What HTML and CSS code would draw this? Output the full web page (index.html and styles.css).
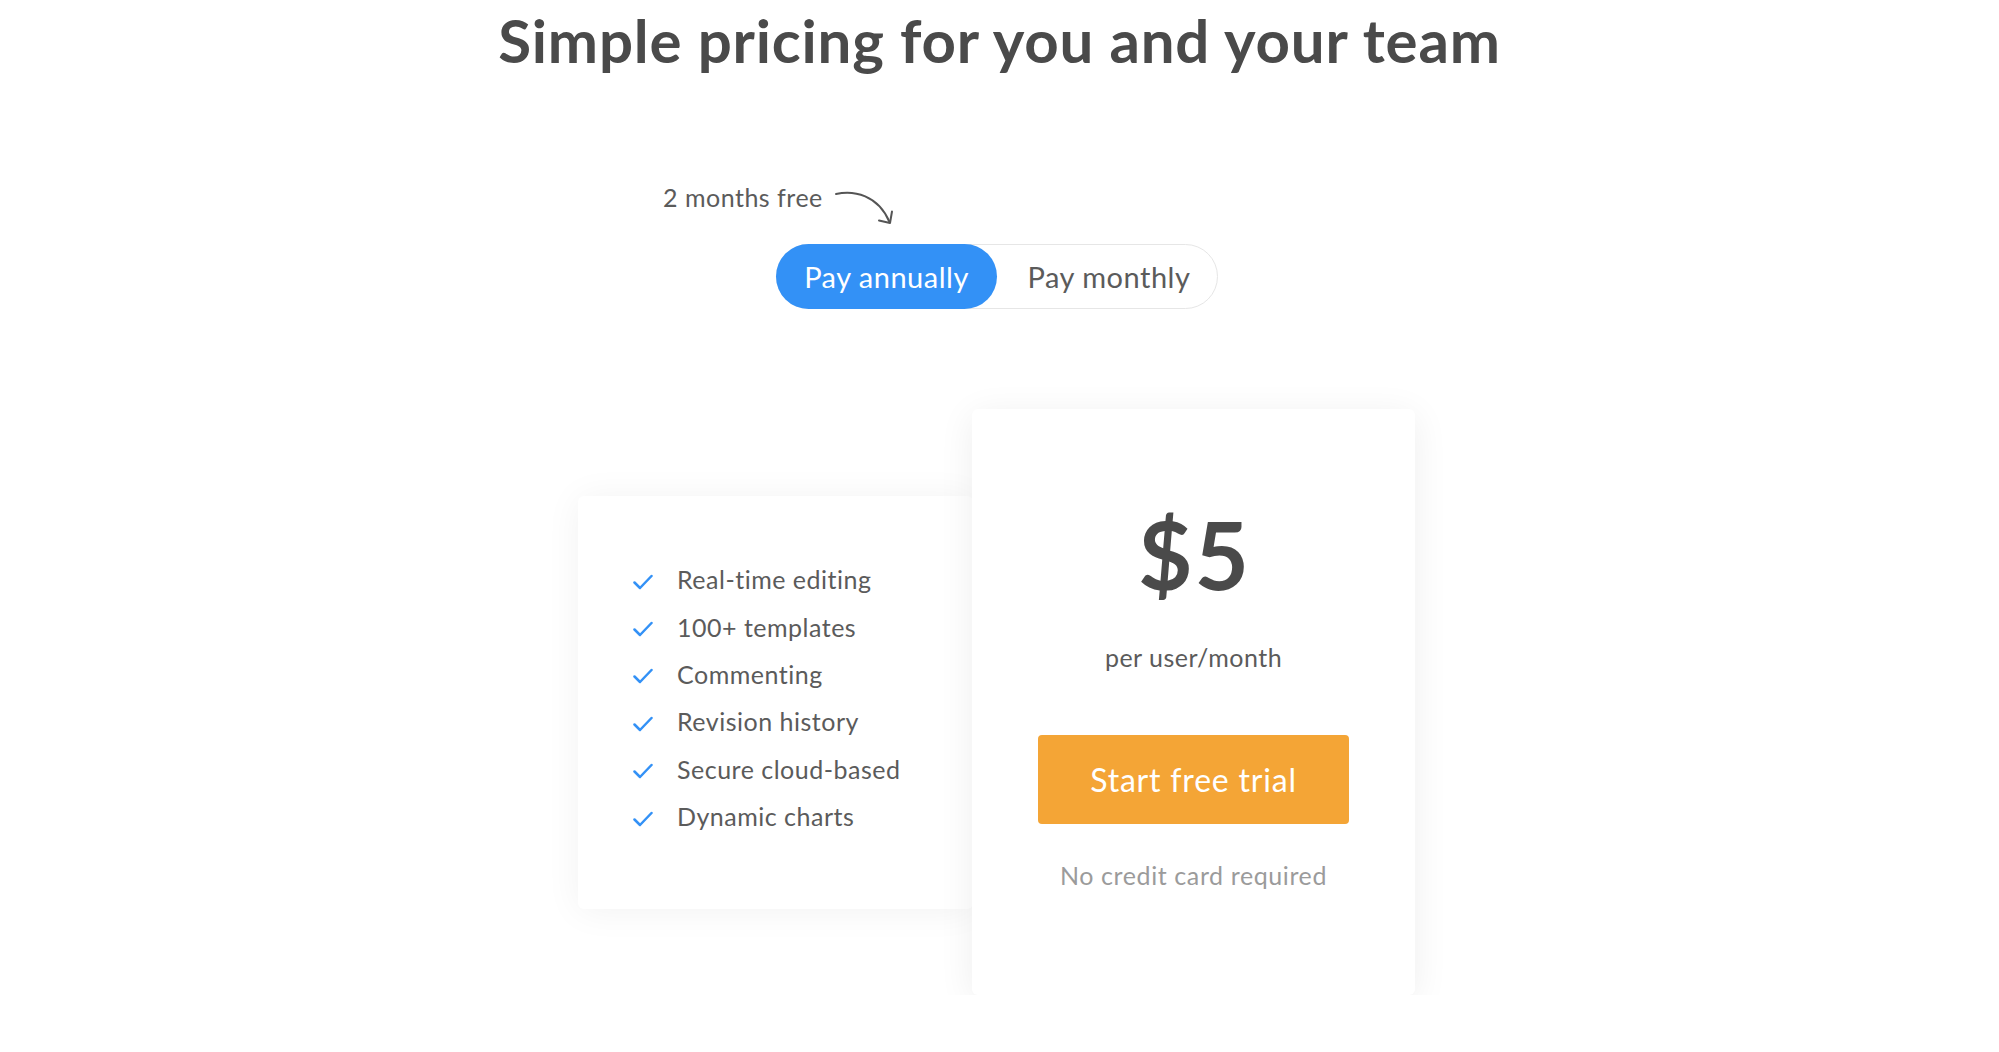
FILE: index.html
```html
<!DOCTYPE html>
<html lang="en">
<head>
<meta charset="utf-8">
<title>Pricing</title>
<link rel="stylesheet" href="styles.css">
</head>
<body>
<main class="page">
  <h1 class="title">Simple pricing for you and your team</h1>

  <section class="billing">
    <div class="note">
      <span class="note-text">2 months free</span>
      <svg class="note-arrow" width="62" height="40" viewBox="0 0 62 40" fill="none" stroke="#555555" stroke-width="2" stroke-linecap="round" stroke-linejoin="round">
        <path d="M2 7 C 20 3, 44 8, 55.5 35"/>
        <path d="M45 33.5 L56 36 L58 24.5"/>
      </svg>
    </div>
    <div class="toggle">
      <button class="toggle-btn active">Pay annually</button>
      <button class="toggle-btn">Pay monthly</button>
    </div>
  </section>

  <section class="plans">
    <div class="card features">
      <ul class="feature-list">
        <li><svg class="check" width="20" height="16" viewBox="0 0 20 16"><path d="M1.5 8.5 L7 14 L18.5 2" fill="none" stroke="#3391f6" stroke-width="2.5" stroke-linecap="round" stroke-linejoin="round"/></svg>Real-time editing</li>
        <li><svg class="check" width="20" height="16" viewBox="0 0 20 16"><path d="M1.5 8.5 L7 14 L18.5 2" fill="none" stroke="#3391f6" stroke-width="2.5" stroke-linecap="round" stroke-linejoin="round"/></svg>100+ templates</li>
        <li><svg class="check" width="20" height="16" viewBox="0 0 20 16"><path d="M1.5 8.5 L7 14 L18.5 2" fill="none" stroke="#3391f6" stroke-width="2.5" stroke-linecap="round" stroke-linejoin="round"/></svg>Commenting</li>
        <li><svg class="check" width="20" height="16" viewBox="0 0 20 16"><path d="M1.5 8.5 L7 14 L18.5 2" fill="none" stroke="#3391f6" stroke-width="2.5" stroke-linecap="round" stroke-linejoin="round"/></svg>Revision history</li>
        <li><svg class="check" width="20" height="16" viewBox="0 0 20 16"><path d="M1.5 8.5 L7 14 L18.5 2" fill="none" stroke="#3391f6" stroke-width="2.5" stroke-linecap="round" stroke-linejoin="round"/></svg>Secure cloud-based</li>
        <li><svg class="check" width="20" height="16" viewBox="0 0 20 16"><path d="M1.5 8.5 L7 14 L18.5 2" fill="none" stroke="#3391f6" stroke-width="2.5" stroke-linecap="round" stroke-linejoin="round"/></svg>Dynamic charts</li>
      </ul>
    </div>
    <div class="card price">
      <div class="amount">$5</div>
      <div class="period">per user/month</div>
      <button class="cta">Start free trial</button>
      <div class="fine">No credit card required</div>
    </div>
  </section>
</main>
</body>
</html>
```

FILE: styles.css
```css
* { box-sizing: border-box; }

html, body {
  margin: 0;
  padding: 0;
  background: #ffffff;
}

body {
  font-family: "Lato", "Open Sans", sans-serif;
  color: #5b5b5b;
}

.page {
  display: flex;
  flex-direction: column;
  align-items: center;
}

.title {
  margin: 4px 0 0;
  font-size: 60px;
  line-height: 72px;
  font-weight: 700;
  color: #4a4a4a;
  letter-spacing: 0.8px;
}

.billing {
  margin-top: 106px;
  margin-right: 5px;
  width: 442px;
  display: flex;
  flex-direction: column;
}

.note {
  display: flex;
  align-items: flex-start;
  margin-left: -113px;
  height: 62px;
}

.note-text {
  font-size: 25px;
  line-height: 30px;
  letter-spacing: 0.5px;
  color: #5b5b5b;
}

.note-arrow {
  margin-left: 11px;
  margin-top: 5px;
}

.toggle {
  display: flex;
  height: 65px;
  border: 1px solid #e6e6e6;
  border-radius: 33px;
  background: #ffffff;
}

.toggle-btn {
  border: 0;
  background: transparent;
  font-family: inherit;
  font-size: 29px;
  letter-spacing: 0.5px;
  color: #5b5b5b;
  border-radius: 33px;
  padding: 0;
  cursor: pointer;
}

.toggle-btn.active {
  flex: 0 0 221px;
  margin: -1px 0 -1px -1px;
  background: #3391f6;
  color: #ffffff;
}

.toggle-btn:not(.active) {
  flex: 1 1 auto;
  padding-left: 4px;
}

.plans {
  margin-top: 100px;
  display: flex;
  align-items: center;
  justify-content: center;
  padding-right: 6px;
}

.card {
  background: #ffffff;
  border-radius: 6px;
}

.features {
  width: 395px;
  height: 413px;
  padding: 60px 30px 0 55px;
  box-shadow: 0 2px 36px rgba(0, 0, 0, 0.055);
  margin-right: -1px;
}

.feature-list {
  list-style: none;
  margin: 0;
  padding: 0;
}

.feature-list li {
  display: flex;
  align-items: center;
  height: 47.4px;
  font-size: 25px;
  letter-spacing: 0.5px;
  color: #5b5b5b;
  white-space: nowrap;
}

.check {
  flex: 0 0 auto;
  margin-right: 24px;
  margin-top: 5px;
}

.price {
  position: relative;
  z-index: 1;
  width: 443px;
  height: 586px;
  padding-top: 98px;
  display: flex;
  flex-direction: column;
  align-items: center;
  box-shadow: 0 6px 36px rgba(0, 0, 0, 0.07);
}

.amount {
  font-size: 94px;
  line-height: 94px;
  font-weight: 700;
  letter-spacing: 2px;
  margin-right: -2px;
  color: #4a4a4a;
}

.period {
  margin-top: 41px;
  font-size: 25px;
  line-height: 30px;
  letter-spacing: 0.5px;
  color: #5b5b5b;
}

.cta {
  margin-top: 63px;
  width: 311px;
  height: 89px;
  border: 0;
  border-radius: 4px;
  background: #f4a536;
  color: #ffffff;
  font-family: inherit;
  font-size: 32px;
  letter-spacing: 0.8px;
  padding: 0;
  cursor: pointer;
}

.fine {
  margin-top: 36px;
  font-size: 25px;
  line-height: 30px;
  letter-spacing: 0.6px;
  color: #9b9b9b;
}
```
